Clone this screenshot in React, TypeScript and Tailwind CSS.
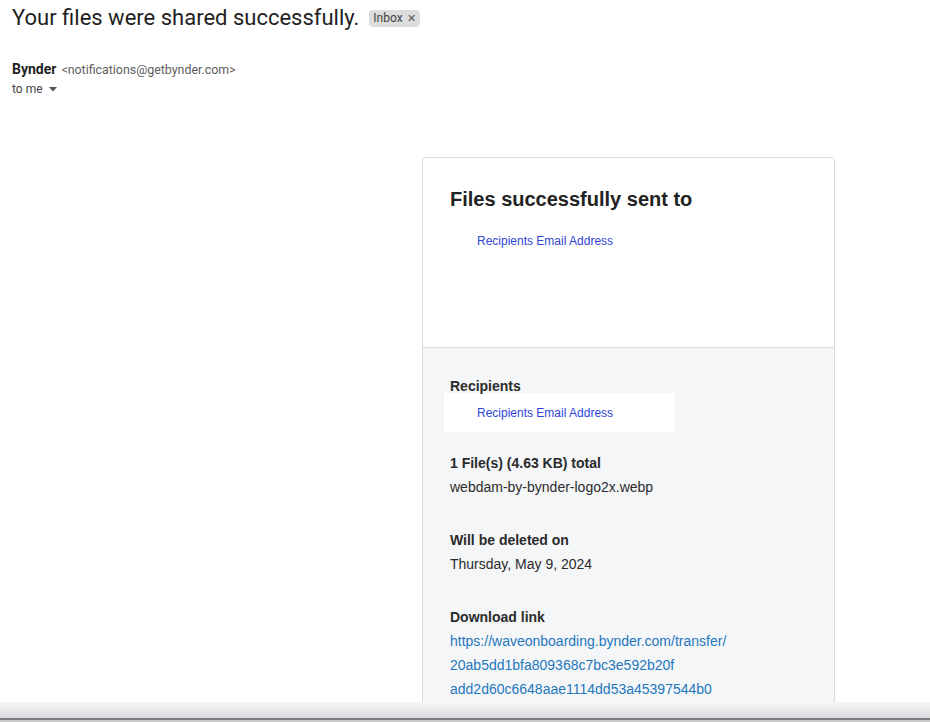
import React from 'react';

const sans = { fontFamily: 'Roboto, "Liberation Sans", Arial, sans-serif' };

const Field = ({ label, children, className = '' }: { label: string; children: React.ReactNode; className?: string }) => (
  <div className={className}>
    <div className="font-bold text-[14px] leading-[24px] text-[#2b2b2b]">{label}</div>
    {children}
  </div>
);

const App = () => {
  return (
    <div className="h-[722px] w-[930px] flex flex-col overflow-hidden bg-white">
      <div className="flex-1 min-h-0 overflow-hidden">
        {/* ── Subject line ── */}
        <div className="flex items-center pl-3 pt-[3px] h-[32px]" style={sans}>
          <h1 className="text-[22px] leading-[28px] text-[#1f1f1f] font-normal">Your files were shared successfully.</h1>
          <span className="ml-[10px] mt-[1px] h-[17px] px-[4px] rounded-[4px] bg-[#dddddd] text-[12px] leading-[17px] text-[#444] flex items-center gap-[4px]">
            Inbox
            <span className="text-[11px] text-[#555]">✕</span>
          </span>
        </div>

        {/* ── Sender ── */}
        <div className="pl-3 pt-[28px]" style={sans}>
          <div className="flex items-baseline gap-[5px] leading-[18px]">
            <span className="text-[14px] font-bold text-[#1f1f1f]">Bynder</span>
            <span className="text-[12.4px] text-[#5e5e5e]">&lt;notifications@getbynder.com&gt;</span>
          </div>
          <div className="flex items-center gap-[5px] text-[12px] leading-[20px] text-[#444]">
            to me
            <svg width="10" height="10" viewBox="0 0 10 10">
              <path d="M1 3h8L5 7.5z" fill="#555" />
            </svg>
          </div>
        </div>

        {/* ── Email body card ── */}
        <div className="ml-[422px] mt-[58px] w-[413px] border border-[#d8dbe0] rounded-t-[4px]" style={{ fontFamily: '"Liberation Sans", Arial, sans-serif' }}>
          <div className="h-[190px] pl-[27px] pt-[29px] bg-white rounded-t-[4px] border-b border-[#d8dbe0]">
            <h2 className="text-[20px] leading-[24px] font-bold text-[#222]">Files successfully sent to</h2>
            <div className="mt-[22px] pl-[27px] text-[12px] leading-[16px] text-[#2f44d6]">Recipients Email Address</div>
          </div>

          <div className="bg-[#f5f6f8] pl-[27px] pt-[30px] pb-10 text-[#2b2b2b]">
            <div className="font-bold text-[14px] leading-[16px]">Recipients</div>
            <div className="ml-[-6px] mt-[-1px] w-[231px] h-[39px] bg-white flex items-center pl-[33px] text-[12px] text-[#2f44d6]">
              Recipients Email Address
            </div>

            <Field label="1 File(s) (4.63 KB) total" className="mt-[19px]">
              <div className="text-[14px] leading-[24px]">webdam-by-bynder-logo2x.webp</div>
            </Field>

            <Field label="Will be deleted on" className="mt-[29px]">
              <div className="text-[14px] leading-[24px]">Thursday, May 9, 2024</div>
            </Field>

            <Field label="Download link" className="mt-[29px]">
              <div className="text-[14px] leading-[24px] text-[#1f77bd]">
                <div>https://waveonboarding.bynder.com/transfer/</div>
                <div>20ab5dd1bfa809368c7bc3e592b20f</div>
                <div>add2d60c6648aae1114dd53a45397544b0</div>
              </div>
            </Field>
          </div>
        </div>
      </div>

      {/* ── Bottom window edge ── */}
      <div className="h-[16px] bg-gradient-to-b from-[#f6f6f7] to-[#dcdde0]" />
      <div className="h-[2px] bg-[#7b7b7d]" />
      <div className="h-[2px] bg-[#c9c9cb]" />
    </div>
  );
};

export default App;
